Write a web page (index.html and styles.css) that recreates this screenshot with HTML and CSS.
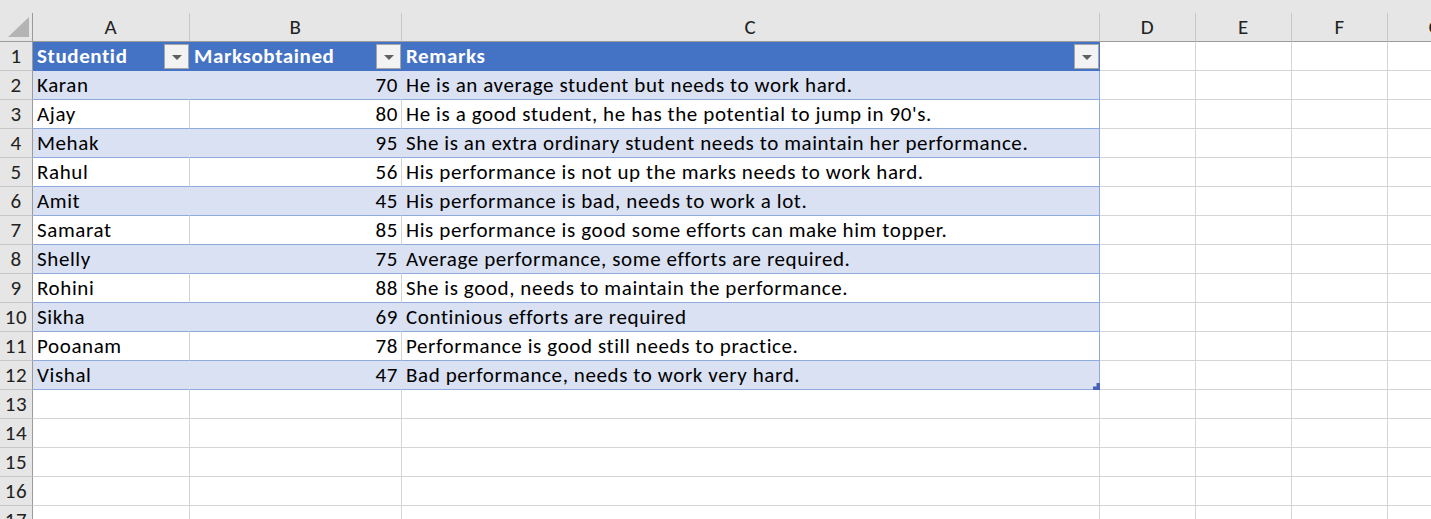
FILE: index.html
```html
<!DOCTYPE html>
<html>
<head>
    <title>Students - Excel</title>
    <link rel="stylesheet" href="styles.css">
</head>
<body>
<div class="sheet">
    <div class="strip"></div>

    <div class="row colhead">
        <div class="corner"><svg width="32" height="28" viewBox="0 0 32 28"><polygon points="8,24 29,24 29,4" fill="#b4b4b4"/></svg></div>
        <div>A</div><div>B</div><div>C</div><div>D</div><div>E</div><div>F</div><div>G</div>
    </div>

    <div class="row head">
        <div class="rh">1</div>
        <div class="th"><span>Studentid</span><span class="fb"></span></div>
        <div class="th"><span>Marksobtained</span><span class="fb"></span></div>
        <div class="th last"><span>Remarks</span><span class="fb"></span></div>
        <div></div><div></div><div></div><div></div>
    </div>

    <div class="row band">
        <div class="rh">2</div>
        <div class="td">Karan</div><div class="td num">70</div><div class="td last">He is an average student but needs to work hard.</div>
        <div></div><div></div><div></div><div></div>
    </div>
    <div class="row plain">
        <div class="rh">3</div>
        <div class="td">Ajay</div><div class="td num">80</div><div class="td last">He is a good student, he has the potential to jump in 90's.</div>
        <div></div><div></div><div></div><div></div>
    </div>
    <div class="row band">
        <div class="rh">4</div>
        <div class="td">Mehak</div><div class="td num">95</div><div class="td last">She is an extra ordinary student needs to maintain her performance.</div>
        <div></div><div></div><div></div><div></div>
    </div>
    <div class="row plain">
        <div class="rh">5</div>
        <div class="td">Rahul</div><div class="td num">56</div><div class="td last">His performance is not up the marks needs to work hard.</div>
        <div></div><div></div><div></div><div></div>
    </div>
    <div class="row band">
        <div class="rh">6</div>
        <div class="td">Amit</div><div class="td num">45</div><div class="td last">His performance is bad, needs to work a lot.</div>
        <div></div><div></div><div></div><div></div>
    </div>
    <div class="row plain">
        <div class="rh">7</div>
        <div class="td">Samarat</div><div class="td num">85</div><div class="td last">His performance is good some efforts can make him topper.</div>
        <div></div><div></div><div></div><div></div>
    </div>
    <div class="row band">
        <div class="rh">8</div>
        <div class="td">Shelly</div><div class="td num">75</div><div class="td last">Average performance, some efforts are required.</div>
        <div></div><div></div><div></div><div></div>
    </div>
    <div class="row plain">
        <div class="rh">9</div>
        <div class="td">Rohini</div><div class="td num">88</div><div class="td last">She is good, needs to maintain the performance.</div>
        <div></div><div></div><div></div><div></div>
    </div>
    <div class="row band">
        <div class="rh">10</div>
        <div class="td">Sikha</div><div class="td num">69</div><div class="td last">Continious efforts are required</div>
        <div></div><div></div><div></div><div></div>
    </div>
    <div class="row plain">
        <div class="rh">11</div>
        <div class="td">Pooanam</div><div class="td num">78</div><div class="td last">Performance is good still needs to practice.</div>
        <div></div><div></div><div></div><div></div>
    </div>
    <div class="row band">
        <div class="rh">12</div>
        <div class="td">Vishal</div><div class="td num">47</div><div class="td last end">Bad performance, needs to work very hard.<span class="grip"></span></div>
        <div></div><div></div><div></div><div></div>
    </div>

    <div class="row"><div class="rh">13</div><div></div><div></div><div></div><div></div><div></div><div></div><div></div></div>
    <div class="row"><div class="rh">14</div><div></div><div></div><div></div><div></div><div></div><div></div><div></div></div>
    <div class="row"><div class="rh">15</div><div></div><div></div><div></div><div></div><div></div><div></div><div></div></div>
    <div class="row"><div class="rh">16</div><div></div><div></div><div></div><div></div><div></div><div></div><div></div></div>
    <div class="row"><div class="rh">17</div><div></div><div></div><div></div><div></div><div></div><div></div><div></div></div>
</div>
</body>
</html>
```

FILE: styles.css
```css
body { margin: 0; background: #fff; }
.sheet { width: 1431px; height: 519px; overflow: hidden; font-family: Calibri, Carlito, Lato, sans-serif; font-size: 21px; letter-spacing: 0.6px; color: #000; }
.strip { height: 13px; background: #e6e6e6; width: 1484px; }

.row { display: grid; grid-template-columns: 33px 157px 212px 698px 96px 96px 96px 96px; height: 29px; width: 1484px; }
.row > div { box-sizing: border-box; border-right: 1px solid #d4d4d4; border-bottom: 1px solid #d4d4d4; padding: 0 4px; line-height: 28px; white-space: nowrap; overflow: hidden; }

.rh { background: #e6e6e6; text-align: center; color: #222; border-right-color: #9b9b9b !important; border-bottom-color: #c8c8c8 !important; padding: 0 !important; }

.colhead > div { background: #e6e6e6; text-align: center; color: #222; border-right-color: #c8c8c8; border-bottom-color: #9b9b9b; }
.colhead .corner { padding: 0; border-right-color: #9b9b9b; }
.corner svg { display: block; }

.head .th { background: #4472c4; color: #fff; font-weight: bold; border-color: #4472c4; display: flex; justify-content: space-between; align-items: center; padding-right: 0; }
.head .th.last { border-right-color: #4472c4; }
.fb { width: 25px; height: 25px; box-sizing: border-box; background: #f3f3f3; border: 1px solid #a6a6a6; position: relative; flex: none; margin-top: 1px; }
.fb::after { content: ""; position: absolute; left: 7px; top: 10px; border-left: 5px solid transparent; border-right: 5px solid transparent; border-top: 5px solid #606060; }

.td { border-bottom-color: #8ea9db !important; }
.num { text-align: right; padding-right: 3px !important; }
.td.last { border-right-color: #8ea9db !important; }
.band .td { background: #d9e1f2; border-right-color: #d9e1f2; }
.end { position: relative; overflow: visible !important; }
.grip { position: absolute; right: -1px; bottom: -1px; width: 7px; height: 7px; background: #4a5fb7; clip-path: polygon(50% 0, 100% 0, 100% 100%, 0 100%, 0 50%, 50% 50%); }
```
